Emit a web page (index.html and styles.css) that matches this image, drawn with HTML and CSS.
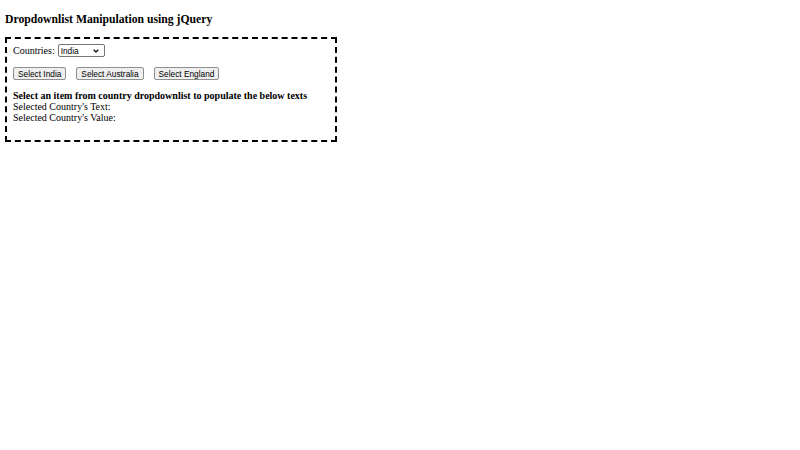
FILE: index.html
```html
<!DOCTYPE html>
<html>
<head>
<meta charset="utf-8">
<title>Dropdownlist Manipulation using jQuery</title>
<link rel="stylesheet" href="styles.css">
</head>
<body>
<h3 class="title">Dropdownlist Manipulation using jQuery</h3>
<div class="panel">
  <div class="row">
    <label class="label" for="countries">Countries:</label>
    <select id="countries" class="select">
      <option value="1">India</option>
      <option value="2">Australia</option>
      <option value="3">England</option>
    </select>
  </div>
  <div class="row buttons">
    <button class="btn">Select India</button>
    <button class="btn">Select Australia</button>
    <button class="btn">Select England</button>
  </div>
  <div class="info">
    <div class="info-head">Select an item from country dropdownlist to populate the below texts</div>
    <div>Selected Country's Text:</div>
    <div>Selected Country's Value:</div>
  </div>
</div>
</body>
</html>
```
FILE: styles.css
```css
html, body {
  background: #fff;
  color: #000;
}
body {
  margin: 5px;
  font-family: "Liberation Serif", "Times New Roman", serif;
  font-size: 10px;
}
.title {
  font-size: 11.7px;
  font-weight: bold;
  margin: 7.7px 0 11.7px 0;
}
.panel {
  width: 316px;
  border: 2px dashed #000;
  padding: 5px 6px 17px 6px;
}
.row {
  display: flex;
  align-items: center;
  gap: 3px;
}
.select {
  -webkit-appearance: none;
  appearance: none;
  font-family: "Liberation Sans", Arial, sans-serif;
  font-size: 8.3px;
  color: #000;
  width: 47px;
  height: 13px;
  padding: 0 2px;
  margin: 0;
  border: 1px solid #767676;
  border-radius: 2px;
  background: #fff url("data:image/svg+xml;utf8,<svg xmlns='http://www.w3.org/2000/svg' width='6' height='4' viewBox='0 0 6 4'><path d='M0.7 0.7 L3 3 L5.3 0.7' fill='none' stroke='%23111' stroke-width='1.3'/></svg>") no-repeat right 5px center;
  background-size: 6px 4px;
}
.buttons {
  margin-top: 10px;
  gap: 10px;
}
.btn {
  font-family: "Liberation Sans", Arial, sans-serif;
  font-size: 8.3px;
  height: 13px;
  padding: 0 4px;
  margin: 0;
  background: #efefef;
  border: 1px solid #8f8f8f;
  border-radius: 2px;
  color: #000;
}
.info {
  margin-top: 10px;
  line-height: 11px;
}
.info-head {
  font-weight: bold;
}
```
